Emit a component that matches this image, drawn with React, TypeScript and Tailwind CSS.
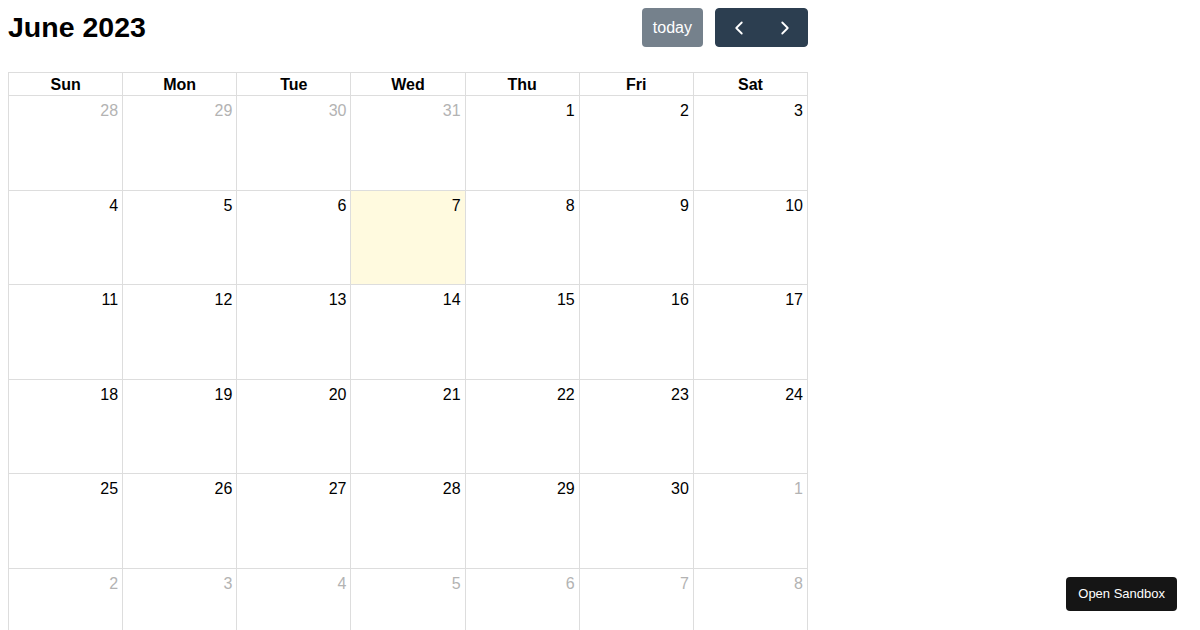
import React from 'react';
import { ChevronLeft, ChevronRight } from 'lucide-react';

type Day = { n: number; other: boolean; today?: boolean };

const DAYS = ['Sun', 'Mon', 'Tue', 'Wed', 'Thu', 'Fri', 'Sat'];

const buildWeeks = (): Day[][] => {
  const days: Day[] = [];
  [28, 29, 30, 31].forEach(n => days.push({ n, other: true }));
  for (let n = 1; n <= 30; n++) days.push({ n, other: false, today: n === 7 });
  for (let n = 1; n <= 8; n++) days.push({ n, other: true });
  const weeks: Day[][] = [];
  for (let i = 0; i < days.length; i += 7) weeks.push(days.slice(i, i + 7));
  return weeks;
};

const App: React.FC = () => {
  const weeks = buildWeeks();

  return (
    <div className="min-h-screen bg-white p-2 font-['Liberation_Sans',Arial,sans-serif] text-black">
      <div className="w-[800px]">
        <div className="mb-[25px] flex items-center justify-between">
          <h2 className="text-[28.5px] font-bold leading-[1.2]">June 2023</h2>
          <div className="flex items-center gap-3">
            <button
              disabled
              className="h-[39px] rounded bg-[#2c3e50] px-[11px] text-base text-white opacity-65"
            >
              today
            </button>
            <div className="flex h-[39px] overflow-hidden rounded border border-[#2c3e50] bg-[#2c3e50] text-white">
              <button className="flex w-[46px] items-center justify-center">
                <ChevronLeft size={22} strokeWidth={2} />
              </button>
              <button className="flex w-[45px] items-center justify-center">
                <ChevronRight size={22} strokeWidth={2} />
              </button>
            </div>
          </div>
        </div>

        <div className="border-l border-t border-[#ddd]">
          <div className="grid grid-cols-7">
            {DAYS.map(d => (
              <div key={d} className="h-[23px] border-b border-r border-[#ddd] text-center text-base font-bold leading-[23px]">
                {d}
              </div>
            ))}
          </div>
          {weeks.map((week, i) => (
            <div key={i} className="grid grid-cols-7">
              {week.map((day, j) => (
                <div
                  key={j}
                  className={`h-[94.5px] border-b border-r border-[#ddd] p-1 text-right text-base leading-[22px] ${
                    day.today ? 'bg-[rgba(255,220,40,0.15)]' : ''
                  } ${day.other ? 'text-[#b3b3b3]' : ''}`}
                >
                  {day.n}
                </div>
              ))}
            </div>
          ))}
        </div>
      </div>

      <button className="fixed bottom-[19px] right-[23px] h-[34px] rounded bg-[#151515] px-3 text-[13px] text-white">
        Open Sandbox
      </button>
    </div>
  );
};

export default App;
